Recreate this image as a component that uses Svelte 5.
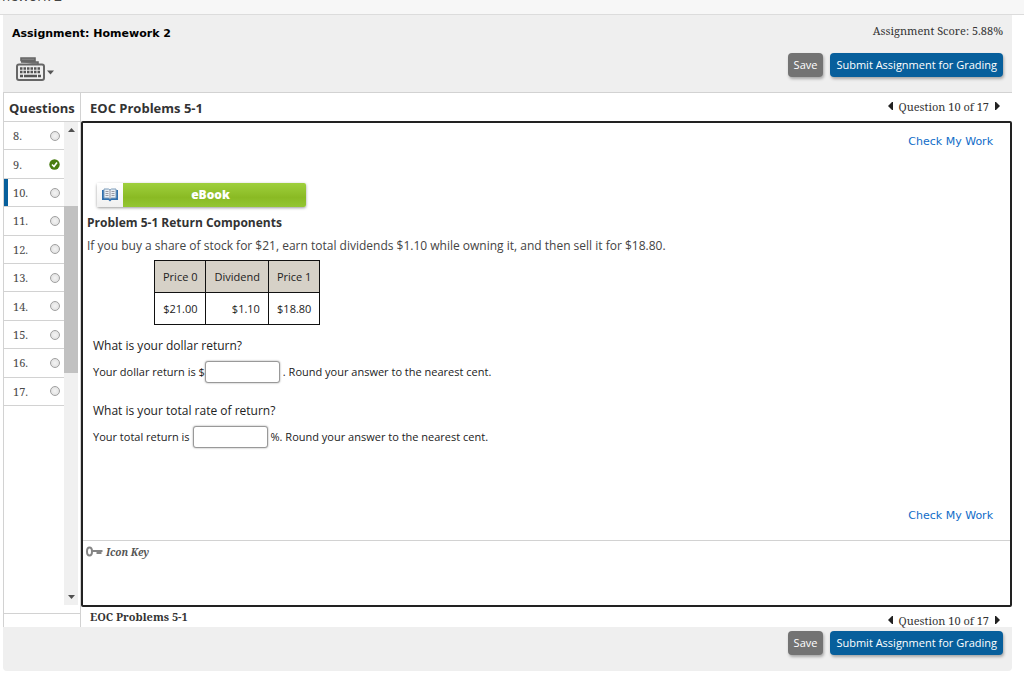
<script>
  const questions = [8, 9, 10, 11, 12, 13, 14, 15, 16, 17];
  const total = 17;

  let current = $state(10);
  let completed = $state([9]);
  let dollarReturn = $state("");
  let totalReturn = $state("");

  const title = "EOC Problems 5-1";
  // scrollbar thumb, in percent of the track
  const thumb = { top: 16, size: 36 };

  function go(step) {
    current = Math.min(total, Math.max(questions[0], current + step));
  }
</script>

{#snippet actions()}
  <div class="actions">
    <button class="btn save" type="button">Save</button>
    <button class="btn submit" type="button">Submit Assignment for Grading</button>
  </div>
{/snippet}

{#snippet pager()}
  <div class="pager">
    <button type="button" aria-label="Previous question" onclick={() => go(-1)}>
      <svg width="5" height="8" viewBox="0 0 5 8"><path d="M5 0v8H4L0 4l4-4z" /></svg>
    </button>
    <span>Question {current} of {total}</span>
    <button type="button" aria-label="Next question" onclick={() => go(1)}>
      <svg width="5" height="8" viewBox="0 0 5 8"><path d="M0 0v8h1l4-4-4-4z" /></svg>
    </button>
  </div>
{/snippet}

<div class="topbar"><span class="crumb">Homework 2</span></div>

<div class="page">
  <header class="header">
    <div class="header-left">
      <h1>Assignment: Homework 2</h1>
      <button class="keyboard" type="button" aria-label="Keyboard tools">
        <svg width="38" height="25" viewBox="0 0 38 25">
          <path d="M5 1h14v2.500H5zM5 5h17v3" fill="#888" stroke="#666" stroke-width="1.600" />
          <rect x="1" y="7.500" width="27" height="15.500" rx="2" fill="#eee" stroke="#666" stroke-width="2" />
          <path d="M4 11.500h21M4 15h21" stroke="#555" stroke-width="2.500" stroke-dasharray="2.500 1" />
          <path d="M4 19h3M8 19h13M22 19h3" stroke="#555" stroke-width="2.500" />
          <path d="M31 13.500h7l-3.500 4z" fill="#555" />
        </svg>
      </button>
    </div>
    <div class="header-right">
      <span class="score">Assignment Score: 5.88%</span>
      {@render actions()}
    </div>
  </header>

  <div class="workspace">
    <nav class="sidebar" aria-label="Questions">
      <h2>Questions</h2>
      <div class="list-wrap">
        <ul>
          {#each questions as n}
            <li class:active={n === current}>
              <a href="#q{n}" onclick={() => (current = n)}>
                <span>{n}.</span>
                {#if completed.includes(n)}
                  <svg width="11" height="11" viewBox="0 0 11 11">
                    <circle cx="5.500" cy="5.500" r="5.200" fill="#4a7d12" />
                    <path d="M3 5.500l2 2L8 3.500" fill="none" stroke="#fff" stroke-width="1.600" />
                  </svg>
                {:else}
                  <i class="dot"></i>
                {/if}
              </a>
            </li>
          {/each}
        </ul>
        <div class="scrollbar" aria-hidden="true">
          <svg width="7" height="4" viewBox="0 0 7 4"><path d="M0 4l3.500-4L7 4z" /></svg>
          <div class="track">
            <div style="height: {thumb.top}%"></div>
            <div class="thumb" style="height: {thumb.size}%"></div>
          </div>
          <svg width="7" height="4" viewBox="0 0 7 4"><path d="M0 0l3.500 4L7 0z" /></svg>
        </div>
      </div>
      <div class="sidebar-foot"></div>
    </nav>

    <main>
      <div class="title-row">
        <h2>{title}</h2>
        {@render pager()}
      </div>

      <section class="problem">
        <a class="check" href="#check">Check My Work</a>

        <a class="ebook" href="#ebook">
          <span class="ebook-icon">
            <svg width="16" height="14" viewBox="0 0 16 14">
              <path d="M0 2h2v8h5l1 1 1-1h5V2h2v10H9.500L8 13.500 6.500 12H0z" fill="#2f6faf" />
              <path d="M2 1h4.500L8 2l1.500-1H14v9H9.500L8 11 6.500 10H2z" fill="#e8eef4" stroke="#7c9cba" stroke-width="1" />
              <path d="M8 2v9M3.500 3.500h3M3.500 5.500h3M3.500 7.500h3M9.500 3.500h3M9.500 5.500h3M9.500 7.500h3" stroke="#9a9aa4" stroke-width="1" />
            </svg>
          </span>
          <span class="ebook-label">eBook</span>
        </a>

        <h3>Problem 5-1 Return Components</h3>
        <p class="intro">If you buy a share of stock for $21, earn total dividends $1.10 while owning it, and then sell it for $18.80.</p>

        <table>
          <thead>
            <tr><th>Price 0</th><th>Dividend</th><th>Price 1</th></tr>
          </thead>
          <tbody>
            <tr><td>$21.00</td><td>$1.10</td><td>$18.80</td></tr>
          </tbody>
        </table>

        <div class="answer">
          <p>What is your dollar return?</p>
          <div class="answer-row">
            <label for="dollar">Your dollar return is $</label>
            <input id="dollar" type="text" bind:value={dollarReturn} />
            <span class="after">. Round your answer to the nearest cent.</span>
          </div>
        </div>

        <div class="answer">
          <p>What is your total rate of return?</p>
          <div class="answer-row">
            <label class="spaced" for="total">Your total return is</label>
            <input id="total" type="text" bind:value={totalReturn} />
            <span class="after">%. Round your answer to the nearest cent.</span>
          </div>
        </div>

        <a class="check bottom" href="#check">Check My Work</a>

        <div class="icon-key">
          <svg width="17" height="11" viewBox="0 0 17 11">
            <ellipse cx="3.500" cy="5.500" rx="2.500" ry="4" fill="none" stroke="#858585" stroke-width="2" />
            <path d="M6 5h10.500M10.500 7h5" stroke="#858585" stroke-width="2" />
          </svg>
          <span>Icon Key</span>
        </div>
      </section>

      <div class="title-row foot">
        <strong>{title}</strong>
        {@render pager()}
      </div>
    </main>
  </div>

  <footer>
    {@render actions()}
  </footer>
</div>

<style>
  :global(body) {
    background: #fff;
    color: #333;
    font-family: "Open Sans", sans-serif;
    font-size: 12px;
  }

  h1,
  h2,
  h3,
  p,
  ul {
    margin: 0;
    padding: 0;
  }

  button {
    border: 0;
    padding: 0;
    background: none;
    cursor: pointer;
  }

  svg {
    display: block;
    flex: none;
  }

  a {
    text-decoration: none;
  }

  .topbar {
    display: flex;
    align-items: flex-end;
    height: 14px;
    overflow: hidden;
    background: #f7f7f7;
    border-bottom: 1px solid #dcdcdc;
  }

  .crumb {
    display: flex;
    justify-content: flex-end;
    width: 62px;
    padding-bottom: 8px;
    line-height: 20px;
    font-size: 14px;
    white-space: nowrap;
    color: #444;
  }

  .page {
    margin: 0 12px 0 3px;
  }

  .header {
    display: flex;
    justify-content: space-between;
    height: 77px;
    background: #efefef;
    border-bottom: 1px solid #d2d2d2;
  }

  .header-left {
    padding: 10px 0 0 9px;
  }

  h1 {
    font: bold 11px/18px "DejaVu Sans", sans-serif;
    color: #000;
  }

  .keyboard {
    display: block;
    margin: 14px 0 0 4px;
  }

  .header-right {
    display: flex;
    flex-direction: column;
    gap: 12px;
    align-items: flex-end;
    padding: 6px 9px 0 0;
  }

  .score,
  .pager,
  li,
  .foot strong,
  .icon-key {
    font-family: "Noto Serif", "Liberation Serif", serif;
  }

  .score {
    font-size: 11px;
    line-height: 20px;
  }

  .actions {
    display: flex;
    gap: 7px;
  }

  .btn {
    height: 24px;
    padding: 0 6px;
    border-radius: 4px;
    color: #fff;
    font: 11px/24px "Open Sans", sans-serif;
    box-shadow: 1px 2px 3px rgba(0, 0, 0, 0.3);
  }

  .save {
    background: #737373;
  }

  .submit {
    background: #075f9c;
  }

  .workspace {
    display: grid;
    grid-template-columns: 77px 1fr;
  }

  .sidebar {
    display: flex;
    flex-direction: column;
    border-left: 1px solid #d2d2d2;
  }

  h2 {
    font-size: 13px;
    line-height: 28px;
    color: #333;
  }

  .sidebar h2 {
    padding: 1px 0 0 5px;
    height: 27px;
    border-bottom: 1px solid #d2d2d2;
  }

  .list-wrap {
    display: flex;
    flex: 1;
  }

  ul {
    display: flex;
    flex-direction: column;
    width: 60px;
    height: 284px;
    list-style: none;
  }

  li {
    flex: 1;
    display: flex;
    border-bottom: 1px solid #d2d2d2;
    font-size: 11px;
  }

  li a {
    flex: 1;
    display: flex;
    align-items: center;
    justify-content: space-between;
    padding: 0 4px 0 9px;
    color: #4a4a4a;
  }

  li.active a {
    padding-left: 5px;
    border-left: 4px solid #075f9c;
  }

  .dot {
    width: 8px;
    height: 8px;
    border: 1px solid #a0a0a0;
    border-radius: 50%;
    background: radial-gradient(#f4f4f4, #dcdcdc);
  }

  .scrollbar {
    display: flex;
    flex-direction: column;
    align-items: center;
    width: 14px;
    margin-bottom: 8px;
    padding: 6px 0;
    background: #f0f0f0;
    fill: #505050;
  }

  .track {
    flex: 1;
    width: 100%;
  }

  .thumb {
    background: #c1c1c1;
  }

  .sidebar-foot {
    height: 13px;
    border-top: 1px solid #d2d2d2;
  }

  main {
    min-width: 0;
    border-left: 1px solid #d2d2d2;
  }

  .title-row {
    display: flex;
    justify-content: space-between;
    height: 28px;
    padding: 0 12px 0 9px;
  }

  .title-row h2 {
    padding-top: 1px;
  }

  .pager {
    display: flex;
    align-items: center;
    gap: 6px;
    height: 26px;
    font-size: 11px;
  }

  .pager svg {
    fill: #222;
  }

  .problem {
    display: flex;
    flex-direction: column;
    border: 2px solid #222;
    border-radius: 2px;
    color: #333;
  }

  .check {
    align-self: flex-end;
    margin: 10px 17px 0 0;
    font: 11px/18px "DejaVu Sans", sans-serif;
    color: #0f6cc8;
  }

  .ebook {
    display: flex;
    width: 209px;
    height: 24px;
    margin: 32px 0 0 14px;
    border-radius: 2px;
    box-shadow: 0 1px 3px rgba(0, 0, 0, 0.4);
  }

  .ebook-icon {
    display: grid;
    place-items: center;
    width: 26px;
    background: linear-gradient(#fff, #f0f0f0);
  }

  .ebook-label {
    flex: 1;
    padding-right: 8px;
    border-radius: 0 2px 2px 0;
    background: linear-gradient(#9fd03d, #8aba24 60%, #93c632);
    color: #fff;
    font-weight: 800;
    font-size: 12px;
    line-height: 24px;
    text-align: center;
  }

  h3 {
    margin: 6px 0 0 4px;
    font-size: 12px;
    line-height: 20px;
  }

  .intro {
    margin: 3px 0 0 4px;
    line-height: 20px;
    color: #444;
  }

  table {
    align-self: flex-start;
    margin: 4px 0 0 71px;
    border-collapse: collapse;
    color: #222;
    font-size: 11px;
  }

  th,
  td {
    height: 31px;
    padding: 0 8px;
    border: 1px solid #111;
    text-align: right;
    font-weight: 400;
  }

  th {
    background: #d6d1c7;
  }

  .answer {
    margin: 11px 0 0 10px;
    color: #222;
  }

  .answer + .answer {
    margin-top: 18px;
  }

  .answer p {
    line-height: 20px;
  }

  .answer-row {
    display: flex;
    align-items: center;
    margin-top: 5px;
    font-size: 11px;
    line-height: 22px;
  }

  .spaced {
    padding-right: 3px;
  }

  .after {
    padding-left: 3px;
  }

  input {
    box-sizing: border-box;
    width: 75px;
    height: 22px;
    border: 1px solid #999;
    border-radius: 3px;
    box-shadow: 0 0 2px rgba(0, 0, 0, 0.4);
    font: inherit;
  }

  .check.bottom {
    margin-top: 59px;
  }

  .icon-key {
    display: flex;
    gap: 3px;
    height: 59px;
    margin-top: 15px;
    padding: 5px 0 0 3px;
    border-top: 1px solid #d2d2d2;
    font-size: 10px;
    font-style: italic;
    font-weight: 700;
    line-height: 12px;
    color: #555;
  }

  .foot {
    height: 20px;
  }

  .foot strong {
    font-size: 11px;
    line-height: 20px;
  }

  footer {
    display: flex;
    justify-content: flex-end;
    height: 40px;
    padding: 4px 9px 0 0;
    background: #efefef;
    border-radius: 0 0 4px 4px;
  }
</style>
